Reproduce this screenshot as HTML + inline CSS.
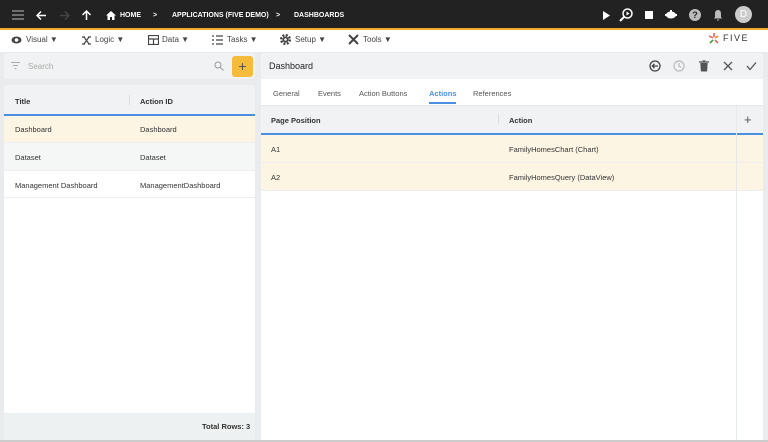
<!DOCTYPE html>
<html><head><style>
*{box-sizing:border-box;margin:0;padding:0}
body{width:768px;height:442px;overflow:hidden;background:#e9ebec;font-family:"Liberation Sans",Arial,sans-serif;position:relative;color:#333}
.abs{position:absolute}
.top{left:0;top:0;width:768px;background:#222;border-bottom:2px solid #f0a928;height:30px}
.top span{position:absolute;top:12px;color:#fff;font-size:7px;font-weight:bold}
.menu{left:0;top:30px;width:768px;height:22px;background:#fff}
.menu span{position:absolute;top:5px;font-size:8px;color:#444}
.panel{background:#fff}
.t{font-size:7.5px;position:absolute;margin-top:1px}
</style></head><body>
<div class="abs top">
<svg class="abs" style="left:12px;top:10px" width="12" height="10"><path d="M0 1h12M0 5h12M0 9h12" stroke="#888" stroke-width="1.5"/></svg>
<svg class="abs" style="left:36px;top:10px" width="11" height="11"><path d="M10 5.5H1M5 1.5L1 5.5L5 9.5" stroke="#fff" stroke-width="1.5" fill="none"/></svg>
<svg class="abs" style="left:59px;top:10px" width="11" height="11"><path d="M1 5.5h9M6 1.5l4 4-4 4" stroke="#444" stroke-width="1.5" fill="none"/></svg>
<svg class="abs" style="left:81px;top:10px" width="11" height="11"><path d="M5.5 10V1M1.5 5l4-4 4 4" stroke="#fff" stroke-width="1.5" fill="none"/></svg>
<svg class="abs" style="left:106px;top:11px" width="10" height="9"><path d="M5 0L0 4.5h1.5V9h2.5V6h2v3h2.5V4.5H10z" fill="#fff"/></svg>
<span style="left:120px">HOME</span><span style="left:153px">&gt;</span>
<span style="left:172px">APPLICATIONS (FIVE DEMO)</span><span style="left:276px">&gt;</span>
<span style="left:294px">DASHBOARDS</span>
<svg class="abs" style="left:603px;top:11px" width="8" height="9"><path d="M0 0L7 4.5L0 9z" fill="#fff"/></svg>
<svg class="abs" style="left:619px;top:8px" width="14" height="14"><circle cx="8.5" cy="5.5" r="4.5" stroke="#fff" stroke-width="1.5" fill="none"/><path d="M5 9L1 13" stroke="#fff" stroke-width="2"/><path d="M7.5 3.5l3 2-3 2z" fill="#fff"/></svg>
<div class="abs" style="left:645px;top:11px;width:8px;height:8px;background:#fff"></div>
<svg class="abs" style="left:665px;top:10px" width="12" height="9"><ellipse cx="6" cy="5" rx="5" ry="3.5" fill="#fff"/><rect x="0" y="4" width="12" height="2" fill="#fff"/><rect x="5" y="0" width="2" height="2" fill="#fff"/></svg>
<div class="abs" style="left:689px;top:9px;width:12px;height:12px;border-radius:50%;background:#bbb;color:#222;font-size:9px;font-weight:bold;text-align:center;line-height:12px">?</div>
<svg class="abs" style="left:713px;top:9px" width="10" height="12"><path d="M5 1C2.5 1 2 3 2 5v3L1 9.5h8L8 8V5C8 3 7.5 1 5 1zM4 10.5h2v1H4z" fill="#bbb"/></svg>
<div class="abs" style="left:735px;top:6px;width:17px;height:17px;border-radius:50%;background:#ccc;color:#fff;font-size:10px;text-align:center;line-height:17px">D</div>
</div>
<div class="abs menu">
<svg class="abs" style="left:11px;top:6px" width="11" height="8"><ellipse cx="5.5" cy="4" rx="5" ry="3.5" fill="#444"/><circle cx="5.5" cy="4" r="1.8" fill="#fff"/></svg>
<span style="left:26px">Visual ▼</span>
<svg class="abs" style="left:81px;top:5px" width="11" height="11"><path d="M1 2h3M7 2h3M1 9h3M7 9h3M3 2l5 7M3 9l5-7" stroke="#444" stroke-width="1.2" fill="none"/></svg>
<span style="left:95px">Logic ▼</span>
<svg class="abs" style="left:148px;top:5px" width="11" height="10"><rect x="0.5" y="0.5" width="10" height="9" fill="none" stroke="#444" stroke-width="1.2"/><path d="M0 4h11M5.5 4v6" stroke="#444" stroke-width="1.2"/></svg>
<span style="left:162px">Data ▼</span>
<svg class="abs" style="left:212px;top:5px" width="11" height="10"><path d="M4 1h7M4 5h7M4 9h7M0 1h2M0 5h2M0 9h2" stroke="#444" stroke-width="1.2"/></svg>
<span style="left:227px">Tasks ▼</span>
<svg class="abs" style="left:280px;top:4px" width="11" height="11"><circle cx="5.5" cy="5.5" r="4.3" fill="none" stroke="#444" stroke-width="2.5" stroke-dasharray="2 1.4"/><circle cx="5.5" cy="5.5" r="3" fill="#444"/><circle cx="5.5" cy="5.5" r="1.3" fill="#fff"/></svg>
<span style="left:295px">Setup ▼</span>
<svg class="abs" style="left:348px;top:4px" width="11" height="11"><path d="M1 1l9 9M10 1L1 10" stroke="#444" stroke-width="2"/></svg>
<span style="left:363px">Tools ▼</span>
<svg class="abs" style="left:707px;top:2px" width="14" height="14"><path d="M7 1v4M11 4L8 6M2 4l4 2M3 11l3-3M11 11L8 8" stroke-width="1.5" stroke="#e55"/><path d="M3 11l3-3" stroke="#3a3" stroke-width="1.5"/><path d="M11 4L8 6" stroke="#f90" stroke-width="1.5"/></svg>
<span style="left:723px;top:3px;font-size:9px;letter-spacing:1.5px;color:#333">FIVE</span>
</div>
<div class="abs" style="left:4px;top:53px;width:251px;height:26px;background:#f1f2f3;border-radius:3px"></div>
<svg class="abs" style="left:11px;top:62px" width="9" height="7"><path d="M0 .5h9M2 3.5h5M3.5 6.5h2" stroke="#aaa"/></svg>
<span class="t" style="left:28px;top:61px;font-size:8px;color:#aaa">Search</span>
<svg class="abs" style="left:214px;top:61px" width="10" height="10"><circle cx="4" cy="4" r="3" stroke="#999" fill="none"/><path d="M6.3 6.3L9.5 9.5" stroke="#999"/></svg>
<div class="abs" style="left:232px;top:56px;width:21px;height:21px;background:#f5bb3b;border-radius:3px;color:#555;font-size:14px;text-align:center;line-height:20px">+</div>
<div class="abs panel" style="left:4px;top:85px;width:251px;height:356px;border-radius:3px 3px 0 0;overflow:hidden">
<div class="abs" style="left:0;top:0;width:251px;height:31px;background:#f1f2f3;border-bottom:2px solid #4a8fe0"></div>
<span class="t" style="left:11px;top:11px;font-weight:bold">Title</span>
<div class="abs" style="left:125px;top:10px;width:1px;height:10px;background:#ddd"></div>
<span class="t" style="left:136px;top:11px;font-weight:bold">Action ID</span>
<div class="abs" style="left:0;top:31px;width:251px;height:27px;background:#fdf5e3;border-bottom:1px solid #eee"></div>
<span class="t" style="left:11px;top:39px">Dashboard</span><span class="t" style="left:136px;top:39px">Dashboard</span>
<div class="abs" style="left:0;top:58px;width:251px;height:28px;background:#f5f7f7;border-bottom:1px solid #eee"></div>
<span class="t" style="left:11px;top:67px">Dataset</span><span class="t" style="left:136px;top:67px">Dataset</span>
<div class="abs" style="left:0;top:86px;width:251px;height:27px;border-bottom:1px solid #eee"></div>
<span class="t" style="left:11px;top:95px">Management Dashboard</span><span class="t" style="left:136px;top:95px">ManagementDashboard</span>
<div class="abs" style="left:0;top:328px;width:251px;height:28px;background:#eef1f1"></div>
<span class="t" style="left:198px;top:336px;font-weight:bold;color:#333">Total Rows: 3</span>
</div>
<div class="abs" style="left:261px;top:53px;width:502px;height:388px;background:#fff;border-radius:3px 3px 0 0;overflow:hidden">
<div class="abs" style="left:0;top:0;width:502px;height:26px;background:#f1f2f3"></div>
<span class="t" style="left:8px;top:7px;font-size:9px;color:#222">Dashboard</span>
<svg class="abs" style="left:388px;top:7px" width="12" height="12"><circle cx="6" cy="6" r="5" stroke="#444" stroke-width="1.3" fill="none"/><path d="M9 6H3.5M5.5 3.8L3.3 6l2.2 2.2" stroke="#444" stroke-width="1.3" fill="none"/></svg>
<svg class="abs" style="left:412px;top:7px" width="12" height="12"><circle cx="6" cy="6" r="5" stroke="#bbb" stroke-width="1.2" fill="none"/><path d="M6 3v3l2 1.5" stroke="#bbb" stroke-width="1.2" fill="none"/></svg>
<svg class="abs" style="left:438px;top:7px" width="10" height="12"><path d="M0 2h10M3.5 1h3" stroke="#555" stroke-width="1.3"/><path d="M1.3 3h7.4l-.6 8.5H1.9z" fill="#555"/></svg>
<svg class="abs" style="left:462px;top:8px" width="10" height="10"><path d="M1 1l8 8M9 1L1 9" stroke="#555" stroke-width="1.3"/></svg>
<svg class="abs" style="left:485px;top:8px" width="11" height="10"><path d="M1 5l3 3.5L10 1.5" stroke="#555" stroke-width="1.3" fill="none"/></svg>
<span class="t" style="left:12px;top:35px;color:#555">General</span>
<span class="t" style="left:57px;top:35px;color:#555">Events</span>
<span class="t" style="left:98px;top:35px;color:#555">Action Buttons</span>
<span class="t" style="left:168px;top:35px;color:#4a8fe0;font-weight:bold">Actions</span>
<div class="abs" style="left:168px;top:49px;width:27px;height:2px;background:#4a8fe0"></div>
<span class="t" style="left:212px;top:35px;color:#555">References</span>
<div class="abs" style="left:0;top:52px;width:502px;height:1px;background:#e4e6e8"></div>
<div class="abs" style="left:0;top:53px;width:502px;height:29px;background:#f1f2f3;border-bottom:2px solid #4a8fe0"></div>
<span class="t" style="left:10px;top:62px;font-weight:bold">Page Position</span>
<div class="abs" style="left:237px;top:61px;width:1px;height:10px;background:#ddd"></div>
<span class="t" style="left:248px;top:62px;font-weight:bold">Action</span>
<div class="abs" style="left:475px;top:53px;width:1px;height:335px;background:#e6e8ea"></div>
<span class="abs" style="left:483px;top:59px;font-size:13px;color:#555">+</span>
<div class="abs" style="left:0;top:82px;width:475px;height:28px;background:#fdf5e3;border-bottom:1px solid #eee"></div>
<div class="abs" style="left:476px;top:82px;width:26px;height:28px;background:#fdf5e3;border-bottom:1px solid #eee"></div>
<span class="t" style="left:10px;top:91px">A1</span><span class="t" style="left:248px;top:91px">FamilyHomesChart (Chart)</span>
<div class="abs" style="left:0;top:110px;width:475px;height:28px;background:#fdf5e3;border-bottom:1px solid #eee"></div>
<div class="abs" style="left:476px;top:110px;width:26px;height:28px;background:#fdf5e3;border-bottom:1px solid #eee"></div>
<span class="t" style="left:10px;top:119px">A2</span><span class="t" style="left:248px;top:119px">FamilyHomesQuery (DataView)</span>
</div>
<div class="abs" style="left:0;top:440px;width:768px;height:2px;background:#ccc"></div>
</body></html>
